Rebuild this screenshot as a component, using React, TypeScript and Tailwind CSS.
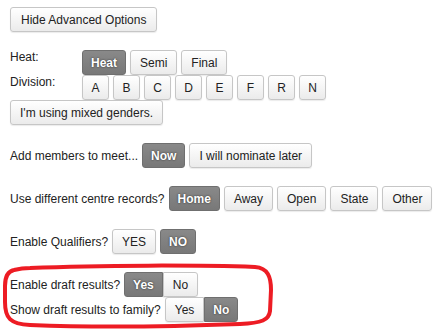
import type { ReactNode } from 'react';
import clsx from 'clsx';

type BtnProps = {
  children: ReactNode;
  active?: boolean;
  className?: string;
};

function Btn({ children, active, className }: BtnProps) {
  return (
    <button
      type="button"
      className={clsx(
        'inline-flex h-[25px] shrink-0 items-center justify-center border text-[12px] leading-none',
        active
          ? 'border-[#6f6f6f] bg-linear-to-b from-[#898989] to-[#787878] px-[8px] font-bold text-white [text-shadow:0_0_2px_rgba(0,0,0,0.7)]'
          : 'border-[#c6c6c6] bg-linear-to-b from-white to-[#ebebeb] px-[9px] text-[#222] shadow-[0_1px_1px_rgba(0,0,0,0.08)]',
        className,
      )}
    >
      {children}
    </button>
  );
}

function Group({ options, value }: { options: string[]; value: string }) {
  return (
    <div className="flex">
      {options.map((o, i) => (
        <Btn
          key={o}
          active={o === value}
          className={clsx(i === 0 && 'rounded-l-[3px]', i === options.length - 1 && 'rounded-r-[3px]')}
        >
          {o}
        </Btn>
      ))}
    </div>
  );
}

const divisions = ['A', 'B', 'C', 'D', 'E', 'F', 'R', 'N'];
const records = ['Home', 'Away', 'Open', 'State', 'Other'];

export default function App() {
  return (
    <div className="relative h-[331px] w-[435px] overflow-hidden bg-white pl-[10px] pt-[7px] font-['Liberation_Sans',Arial,sans-serif] text-[12px] leading-[14px] text-[#222]">
      <Btn className="rounded-[3px] border-[#8db0e4] px-[10px] shadow-[0_0_2px_rgba(90,140,220,0.45)]">
        Hide Advanced Options
      </Btn>

      <div className="mt-[18px] grid grid-cols-[72px_auto] items-start">
        <span>Heat:</span>
        <div className="flex h-[25px] gap-[4px]">
          <Btn active className="rounded-[3px]">Heat</Btn>
          <Btn className="rounded-[3px]">Semi</Btn>
          <Btn className="rounded-[3px]">Final</Btn>
        </div>
        <span>Division:</span>
        <div className="flex h-[25px] gap-[4px]">
          {divisions.map((d) => (
            <Btn key={d} className="w-[27px] rounded-[3px] px-0">
              {d}
            </Btn>
          ))}
        </div>
      </div>
      <Btn className="rounded-[3px]">I'm using mixed genders.</Btn>

      <div className="mt-[18px] flex items-center gap-[4px]">
        <span>Add members to meet...</span>
        <Btn active className="rounded-[3px]">Now</Btn>
        <Btn className="rounded-[3px]">I will nominate later</Btn>
      </div>

      <div className="mt-[18px] flex items-center gap-[4px]">
        <span>Use different centre records?</span>
        {records.map((r) => (
          <Btn key={r} active={r === 'Home'} className="rounded-[3px]">
            {r}
          </Btn>
        ))}
      </div>

      <div className="mt-[18px] flex items-center gap-[4px]">
        <span>Enable Qualifiers?</span>
        <Btn className="rounded-[3px]">YES</Btn>
        <Btn active className="rounded-[3px]">NO</Btn>
      </div>

      <div className="mt-[18px] flex items-center gap-[4px]">
        <span>Enable draft results?</span>
        <Group options={['Yes', 'No']} value="Yes" />
      </div>
      <div className="flex items-center gap-[4px]">
        <span>Show draft results to family?</span>
        <Group options={['Yes', 'No']} value="No" />
      </div>

      {/* hand-drawn highlight around the draft options */}
      <svg className="pointer-events-none absolute left-0 top-0" width="435" height="331" viewBox="0 0 435 331">
        <path
          d="M30 268 C100 265 200 265 255 267 C268 268 271 277 271 290 L270 311 C269 320 262 323 240 324 C160 327 80 327 30 325 C10 324 5 318 5 302 L5 286 C5 276 9 271 14 270 C18 269 22 268 30 268 Z"
          fill="none"
          stroke="#ed1c24"
          strokeWidth="4"
        />
      </svg>
    </div>
  );
}
